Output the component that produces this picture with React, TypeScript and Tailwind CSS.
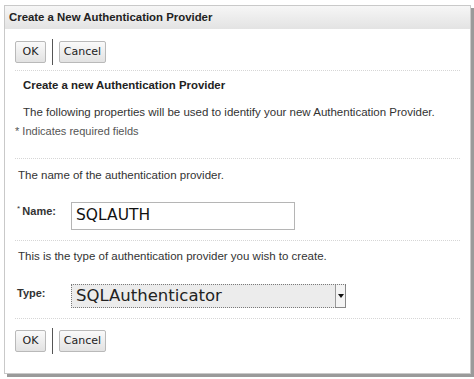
const ui = { fontFamily: '"Liberation Sans", Arial, sans-serif' };
const dv = { fontFamily: '"DejaVu Sans", "Liberation Sans", sans-serif' };

function Buttons() {
  return (
    <div className="flex h-[26px] items-center" style={dv}>
      <button className="h-[22px] w-[31px] rounded-[2px] border border-[#b9b9b9] bg-gradient-to-b from-[#fafafa] to-[#e2e2e2] text-[11px] text-[#222]">
        OK
      </button>
      <span className="mx-[6px] h-[26px] w-px bg-[#555]" />
      <button className="h-[22px] w-[47px] rounded-[2px] border border-[#b9b9b9] bg-gradient-to-b from-[#fafafa] to-[#e2e2e2] text-[11px] text-[#222]">
        Cancel
      </button>
    </div>
  );
}

function Rule() {
  return <div className="h-0 border-t border-dotted border-[#d6d6d6]" />;
}

export default function App() {
  return (
    <div className="h-[379px] w-[474px] bg-white pl-[4px] pt-[5px]" style={ui}>
      <div className="flex h-[369px] w-[467px] flex-col border border-[#c9c9c9] bg-white shadow-[3px_3px_0_#9a9a9a]">
        <div className="flex h-[23px] items-center bg-gradient-to-b from-[#f6f6f6] to-[#e3e3e3] pl-[4px] text-[11.4px] font-bold text-[#222]">
          Create a New Authentication Provider
        </div>

        <div className="px-[10px] pt-[10px]">
          <Buttons />
          <div className="mt-[5px]">
            <Rule />
          </div>

          <div className="pl-[8px] pt-[6px] text-[11.4px] font-bold text-[#222]">
            Create a new Authentication Provider
          </div>
          <div className="pl-[8px] pt-[10px] text-[11.5px] text-[#333]">
            The following properties will be used to identify your new Authentication Provider.
          </div>
          <div className="pt-[2px] text-[11px] text-[#555]">* Indicates required fields</div>

          <div className="mt-[18px]">
            <Rule />
          </div>

          <div className="pl-[3px] pt-[8px] text-[11.5px] text-[#333]">
            The name of the authentication provider.
          </div>
          <div className="flex items-start pt-[18px]">
            <label className="w-[56px] pl-[2px] pt-[1px] text-[11px] font-bold text-[#333]">
              <span className="align-top text-[8px] font-normal">* </span>Name:
            </label>
            <div
              className="flex h-[28px] w-[224px] items-center border border-[#b5b5b5] bg-white pl-[4px] text-[15.5px] text-[#111]"
              style={dv}
            >
              SQLAUTH
            </div>
          </div>

          <div className="mt-[10px]">
            <Rule />
          </div>

          <div className="pl-[3px] pt-[7px] text-[11.5px] text-[#333]">
            This is the type of authentication provider you wish to create.
          </div>
          <div className="flex items-start pt-[19px]">
            <label className="w-[56px] pl-[2px] pt-[1px] text-[11px] font-bold text-[#333]">Type:</label>
            <div className="flex h-[24px] w-[275px] items-stretch border border-dotted border-[#7a7a7a] bg-[#ececec]">
              <div className="flex flex-1 items-center pl-[4px] text-[16.5px] text-[#222]" style={dv}>
                SQLAuthenticator
              </div>
              <div className="flex w-[10px] items-center justify-center border-l border-[#9a9a9a] bg-[#f4f4f4] shadow-[1px_1px_0_#888]">
                <span className="block h-0 w-0 border-x-[3px] border-t-[4px] border-x-transparent border-t-[#111]" />
              </div>
            </div>
          </div>

          <div className="mt-[10px]">
            <Rule />
          </div>
          <div className="pt-[9px]">
            <Buttons />
          </div>
        </div>
      </div>
    </div>
  );
}
